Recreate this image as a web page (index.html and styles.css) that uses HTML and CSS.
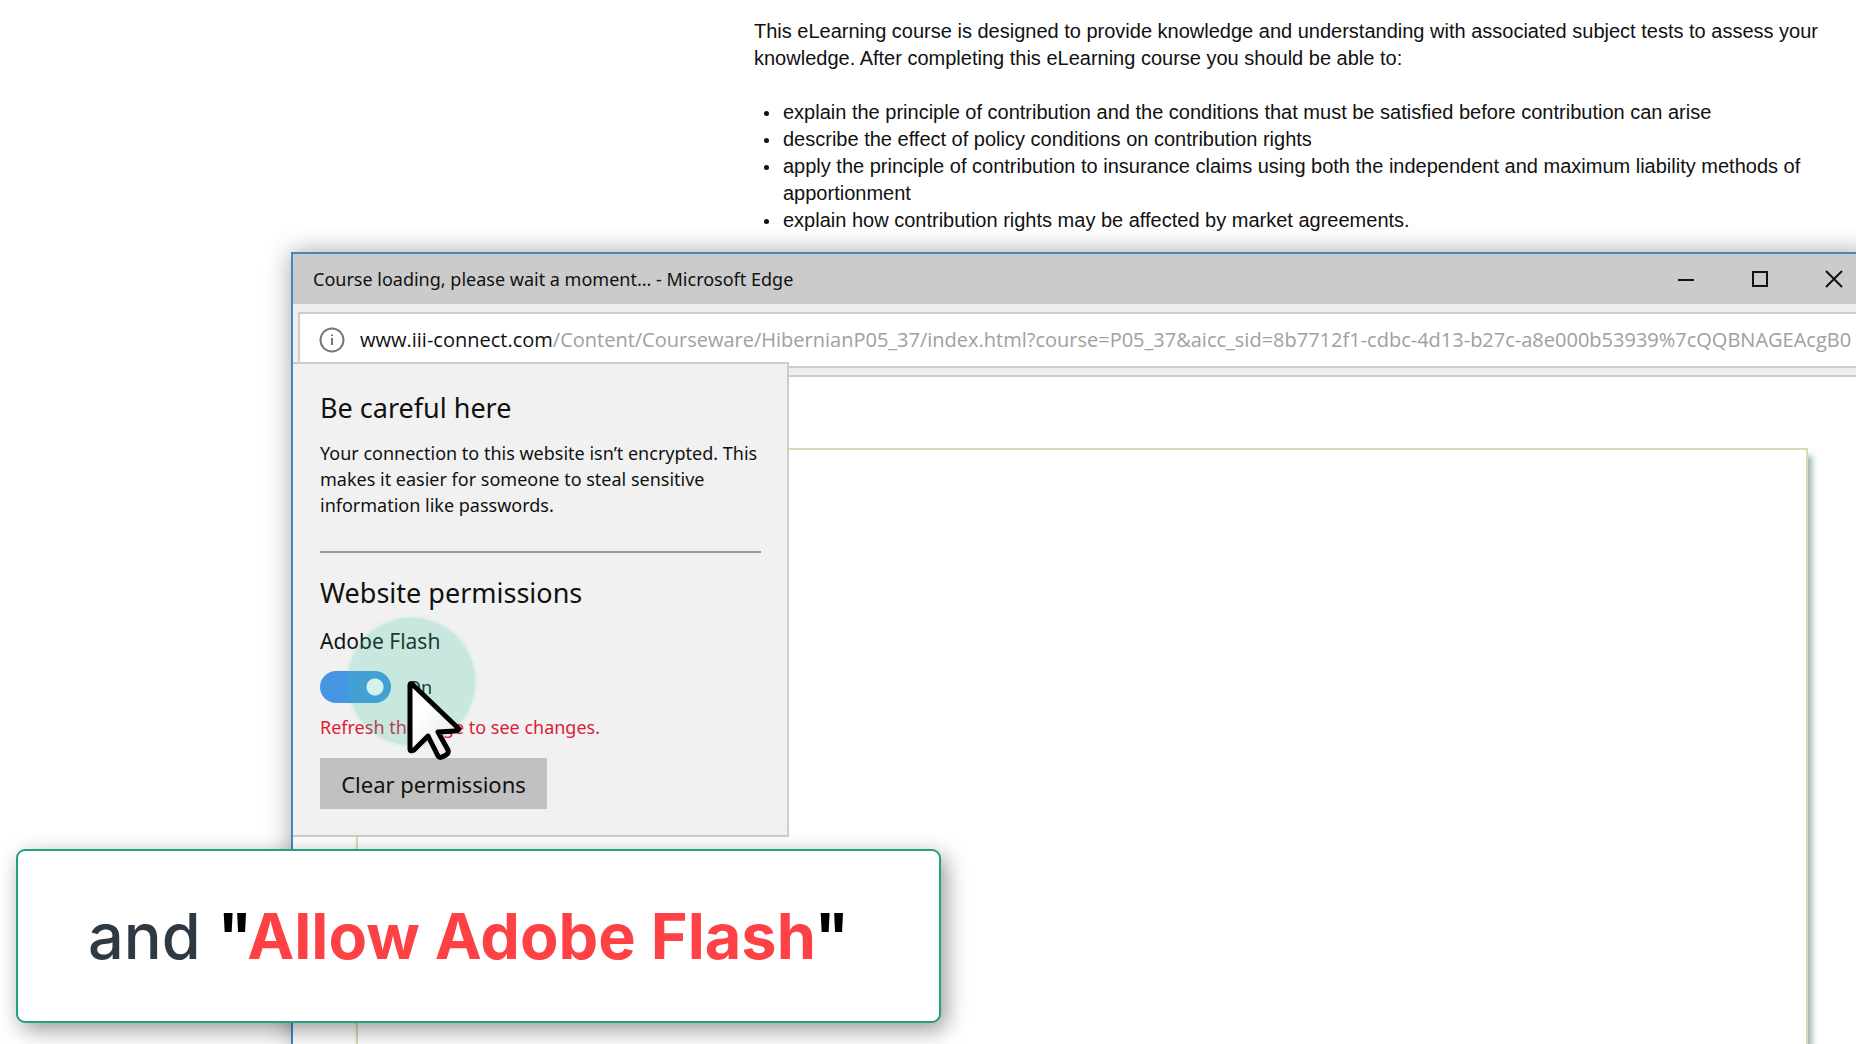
FILE: index.html
```html
<!DOCTYPE html>
<html lang="en">
<head>
<meta charset="utf-8">
<title>Allow Adobe Flash</title>
<link rel="stylesheet" href="styles.css">
</head>
<body>
<main class="course">
  <p>This eLearning course is designed to provide knowledge and understanding with associated subject tests to assess your<br>knowledge. After completing this eLearning course you should be able to:</p>
  <ul class="goals">
    <li>explain the principle of contribution and the conditions that must be satisfied before contribution can arise</li>
    <li>describe the effect of policy conditions on contribution rights</li>
    <li>apply the principle of contribution to insurance claims using both the independent and maximum liability methods of<br>apportionment</li>
    <li>explain how contribution rights may be affected by market agreements.</li>
  </ul>
</main>

<section class="window" aria-label="Microsoft Edge">
  <header class="titlebar">
    <h1 class="title">Course loading, please wait a moment... - Microsoft Edge</h1>
    <button class="winbtn" type="button" aria-label="Minimize"><svg width="18" height="18" viewBox="0 0 18 18"><path d="M1 10H17"/></svg></button>
    <button class="winbtn" type="button" aria-label="Maximize"><svg width="18" height="18" viewBox="0 0 18 18"><path d="M2 2H16V16H2Z"/></svg></button>
    <button class="winbtn" type="button" aria-label="Close"><svg width="18" height="18" viewBox="0 0 18 18"><path d="M1 1L17 17M17 1L1 17"/></svg></button>
  </header>
  <div class="toolbar">
    <div class="address">
      <button class="info" type="button" aria-label="Site information"><svg width="26" height="26" viewBox="0 0 26 26"><circle cx="13" cy="13" r="11.5"/><path d="M13 11V18M13 7.5V9"/></svg></button>
      <a class="url" href="#"><span class="host">www.iii-connect.com</span>/Content/Courseware/HibernianP05_37/index.html?course=P05_37&amp;aicc_sid=8b7712f1-cdbc-4d13-b27c-a8e000b53939%7cQQBNAGEAcgB0</a>
    </div>
  </div>
  <div class="viewport">
    <div class="frame"></div>
  </div>

  <aside class="siteinfo">
    <h2>Be careful here</h2>
    <p class="warning">Your connection to this website isn’t encrypted. This<br>makes it easier for someone to steal sensitive<br>information like passwords.</p>
    <hr>
    <h2>Website permissions</h2>
    <label class="name" for="flash">Adobe Flash</label>
    <div class="switch"><input id="flash" type="checkbox" role="switch" checked><span>On</span></div>
    <p class="refresh">Refresh the page to see changes.</p>
    <button class="clear" type="button">Clear permissions</button>
    <span class="halo"></span>
    <svg class="pointer" width="58" height="84" viewBox="0 0 58 84">
      <defs><linearGradient id="shade" x1="0" y1="0" x2="1" y2="1"><stop offset=".3" stop-color="#fff"/><stop offset="1" stop-color="#e4e4e4"/></linearGradient></defs>
      <path d="M4 5Q4 3 6 4L53 49Q52 51 49 51L32 52L42 70Q43 73 40 75L36 77Q33 78 32 76L22 56L8 70Q4 72 4 69Z"/>
    </svg>
  </aside>
</section>

<div class="caption"><p>and <b>"<em>Allow Adobe Flash</em>"</b></p></div>
</body>
</html>
```
FILE: styles.css
```css
* { box-sizing: border-box; }

body {
  margin: 0;
  height: 100vh;
  overflow: hidden;
  position: relative;
  background: #fff;
  color: #111;
  font-family: "Noto Sans", "Open Sans", sans-serif;
}

h1, h2, p, ul { margin: 0; padding: 0; font-weight: 400; }

button { border: 0; padding: 0; background: none; font: inherit; color: inherit; }

svg { display: block; fill: none; stroke: #111; stroke-width: 2; }

/* Course page behind the pop-up window */
.course {
  padding: 18px 0 0 754px;
  font: 20px/27px "Liberation Sans", Arial, sans-serif;
  white-space: nowrap;
}

.goals { margin-top: 27px; padding-left: 29px; list-style: none; }
.goals li { position: relative; }
.goals li::before {
  content: "";
  position: absolute;
  left: -19px;
  top: 12px;
  width: 5px;
  height: 5px;
  border-radius: 50%;
  background: #111;
}

/* Browser window, running off the right edge */
.window {
  position: absolute;
  inset: 252px -15px 0 291px;
  display: flex;
  flex-direction: column;
  border: solid #4488bf;
  border-width: 2px 0 0 2px;
  background: #fff;
  box-shadow: 0 0 24px rgba(0, 0, 0, .35);
}

.titlebar {
  display: flex;
  align-items: center;
  height: 50px;
  padding-left: 20px;
  background: #cbcbcb;
}
.title { flex: 1; font-size: 18px; line-height: 26px; white-space: nowrap; }
.winbtn { display: grid; place-items: center; width: 74px; height: 48px; }

.toolbar {
  padding: 8px 0 7px 5px;
  border-bottom: 2px solid #ccc;
  background: #efefef;
}
.address {
  display: flex;
  align-items: center;
  gap: 15px;
  height: 56px;
  padding-left: 19px;
  border: 2px solid #ccc;
  background: #fff;
}
.info { flex: none; }
.info svg { stroke: #777; }
.url {
  color: #a0a0a0;
  font-family: "Open Sans", sans-serif;
  font-size: 20px;
  line-height: 28px;
  white-space: nowrap;
  text-decoration: none;
}
.host { color: #111; }

.viewport { flex: 1; display: flex; padding: 71px 63px 0; }
.frame {
  flex: 1;
  border: solid #d3dfb0;
  border-width: 2px 2px 0;
  box-shadow: 4px 8px 6px rgba(50, 105, 75, .5);
}

/* Site information flyout */
.siteinfo {
  position: absolute;
  left: 0;
  top: 108px;
  width: 496px;
  padding: 24px 26px 26px 27px;
  border: solid #ccc;
  border-width: 2px 2px 2px 0;
  background: #f1f1f1;
}
.siteinfo h2 { font-size: 27px; line-height: 40px; }
.warning { margin-top: 12px; font-size: 18px; line-height: 26px; white-space: nowrap; }
hr { margin: 33px 0 20px; border: 0; border-top: 2px solid #999; }
.name { display: block; margin-top: 14px; font-size: 21px; line-height: 28px; }
.switch { display: flex; align-items: center; gap: 16px; margin-top: 16px; font-size: 18px; line-height: 32px; }
.switch input {
  appearance: none;
  width: 71px;
  height: 32px;
  margin: 0;
  border-radius: 16px;
  background: radial-gradient(circle at 55px 16px, #fff 8px, #4696e4 9px);
}
.refresh { margin-top: 11px; color: #dc1c38; font-size: 18px; line-height: 26px; }
.clear {
  display: block;
  margin-top: 18px;
  width: 227px;
  height: 51px;
  background: #c1c1c1;
  font-size: 22px;
}

/* Mouse pointer with its highlight */
.halo {
  position: absolute;
  left: 55px;
  top: 254px;
  width: 127px;
  height: 127px;
  border-radius: 50%;
  background: rgba(54, 196, 160, .22);
  box-shadow: 0 0 4px rgba(54, 196, 160, .22);
}
.pointer { position: absolute; left: 113px; top: 316px; }
.pointer path { fill: url(#shade); stroke: #000; stroke-width: 5; stroke-linejoin: round; }

/* Instruction caption */
.caption {
  position: absolute;
  left: 16px;
  bottom: 21px;
  width: 925px;
  padding: 50px 70px;
  border: 2px solid #23a183;
  border-radius: 9px;
  background: #fff;
  box-shadow: 5px 7px 22px rgba(0, 0, 0, .4);
}
.caption p { color: #2f3943; font: 500 63px/70px Inter, "Open Sans", sans-serif; white-space: nowrap; }
.caption b { color: #000; font-weight: 700; }
.caption em { color: #fd4144; font-style: normal; }
```
